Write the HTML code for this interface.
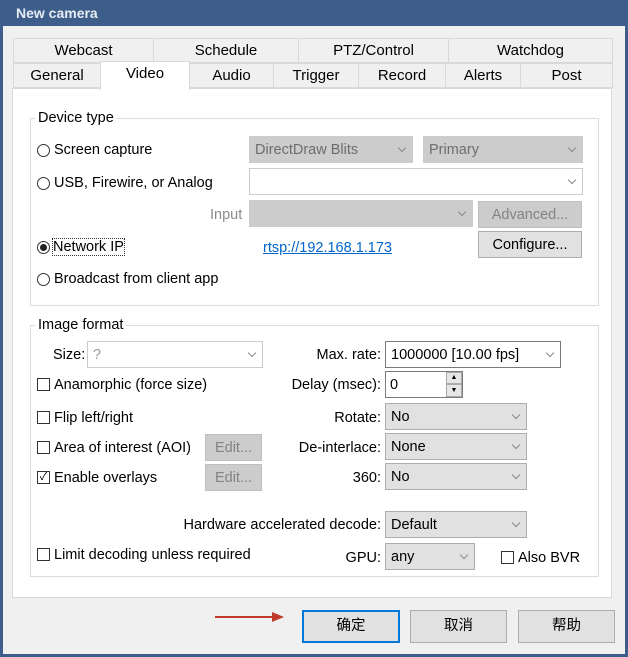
<!DOCTYPE html>
<html><head><meta charset="utf-8"><style>
*{box-sizing:border-box}
body{margin:0;width:628px;height:657px;overflow:hidden;background:#3d5e8b;font-family:"Liberation Sans","Noto Sans CJK SC",sans-serif;font-size:14px;color:#000}
.a{position:absolute}
.title{position:absolute;left:16px;top:5px;color:#e6ecf4;font-weight:bold;font-size:14px;z-index:2}
.tab{position:absolute;height:25px;border:1px solid #d9d9d9;background:#f0f0f0;text-align:center;line-height:24px;font-size:15px}
.panel{position:absolute;left:12px;top:88px;width:600px;height:510px;background:#fff;border:1px solid #d9d9d9}
.grp{position:absolute;border:1px solid #dcdcdc}
.gl{position:absolute;background:#fff;padding:0 3px;font-size:14.5px}
.cb{position:absolute;height:27px;border:1px solid #ccc;background:#ccc;color:#6d6d6d;padding-left:5px;line-height:27px;font-size:14.5px}
.cb.w{background:#fff;color:#000;border-color:#7a7a7a}
.cb.l{background:#fff;border-color:#ccc}
.cb.g{background:#e1e1e1;color:#000;border-color:#adadad}
.cb i{position:absolute;right:7px;top:8px;width:6px;height:6px;border-right:1px solid #888;border-bottom:1px solid #888;transform:rotate(45deg)}
.btn{position:absolute;height:27px;border:1px solid #adadad;background:#e1e1e1;text-align:center;line-height:26px;font-size:14.5px}
.btn.d{background:#cccccc;border-color:#bfbfbf;color:#838383}
.t{position:absolute;font-size:14.5px;white-space:nowrap}
.r{position:absolute;width:13px;height:13px;border:1px solid #333;border-radius:50%;background:#fff}
.r.on::after{content:"";position:absolute;left:2px;top:2px;width:7px;height:7px;border-radius:50%;background:#222}
.c{position:absolute;width:13px;height:13px;border:1px solid #333;background:#fff}
.rt{text-align:right}
</style></head><body>
<div class="title">New camera</div>
<div style="position:absolute;left:0;top:0;width:628px;height:657px">
<div style="position:absolute;left:3px;top:26px;width:622px;height:628px;background:#f0f0f0"></div>
<div class="tab" style="left:13px;top:38px;width:141px">Webcast</div>
<div class="tab" style="left:153px;top:38px;width:146px">Schedule</div>
<div class="tab" style="left:298px;top:38px;width:151px">PTZ/Control</div>
<div class="tab" style="left:448px;top:38px;width:165px">Watchdog</div>
<div class="tab" style="left:13px;top:63px;width:88px">General</div>
<div class="tab" style="left:189px;top:63px;width:85px">Audio</div>
<div class="tab" style="left:273px;top:63px;width:86px">Trigger</div>
<div class="tab" style="left:358px;top:63px;width:88px">Record</div>
<div class="tab" style="left:445px;top:63px;width:76px">Alerts</div>
<div class="tab" style="left:520px;top:63px;width:93px">Post</div>
<div class="panel"></div>
<div class="tab" style="left:100px;top:61px;width:90px;height:29px;background:#fff;border-bottom:none;line-height:24px">Video</div>

<div class="grp" style="left:30px;top:118px;width:569px;height:188px"></div>
<div class="gl" style="left:35px;top:110px">Device type</div>
<div class="r" style="left:37px;top:144px"></div><div class="t" style="left:54px;top:142px">Screen capture</div>
<div class="r" style="left:37px;top:177px"></div><div class="t" style="left:54px;top:175px">USB, Firewire, or Analog</div>
<div class="r on" style="left:37px;top:241px"></div><div class="t" style="left:53px;top:239px;outline:1px dotted #333">Network IP</div>
<div class="r" style="left:37px;top:273px"></div><div class="t" style="left:54px;top:271px">Broadcast from client app</div>
<div class="cb" style="left:249px;top:136px;width:164px">DirectDraw Blits<i></i></div>
<div class="cb" style="left:423px;top:136px;width:160px">Primary<i></i></div>
<div class="cb l" style="left:249px;top:168px;width:334px"><i></i></div>
<div class="t" style="left:210px;top:207px;color:#8a8a8a">Input</div>
<div class="cb" style="left:249px;top:200px;width:224px"><i></i></div>
<div class="btn d" style="left:478px;top:201px;width:104px">Advanced...</div>
<div class="t" style="left:263px;top:240px;color:#0066cc;text-decoration:underline">rtsp://192.168.1.173</div>
<div class="btn" style="left:478px;top:231px;width:104px">Configure...</div>

<div class="grp" style="left:30px;top:325px;width:569px;height:252px"></div>
<div class="gl" style="left:35px;top:317px">Image format</div>
<div class="t" style="left:53px;top:347px">Size:</div>
<div class="cb l" style="left:87px;top:341px;width:176px;color:#999">?<i></i></div>
<div class="t rt" style="left:250px;width:131px;top:347px">Max. rate:</div>
<div class="cb w" style="left:385px;top:341px;width:176px">1000000 [10.00 fps]<i></i></div>
<div class="t rt" style="left:250px;width:131px;top:377px">Delay (msec):</div>
<div class="cb w" style="left:385px;top:371px;width:78px;padding-left:4px">0</div>
<div class="a" style="left:446px;top:372px;width:16px;height:12px;border:1px solid #aaa;background:#e6e6e6;font-size:7px;text-align:center;line-height:10px">▲</div>
<div class="a" style="left:446px;top:384px;width:16px;height:13px;border:1px solid #aaa;background:#e6e6e6;font-size:7px;text-align:center;line-height:11px">▼</div>
<div class="t rt" style="left:250px;width:131px;top:410px">Rotate:</div>
<div class="cb g" style="left:385px;top:403px;width:142px">No<i></i></div>
<div class="t rt" style="left:250px;width:131px;top:440px">De-interlace:</div>
<div class="cb g" style="left:385px;top:433px;width:142px">None<i></i></div>
<div class="t rt" style="left:250px;width:131px;top:470px">360:</div>
<div class="cb g" style="left:385px;top:463px;width:142px">No<i></i></div>
<div class="c" style="left:37px;top:378px"></div><div class="t" style="left:54px;top:377px">Anamorphic (force size)</div>
<div class="c" style="left:37px;top:411px"></div><div class="t" style="left:54px;top:410px">Flip left/right</div>
<div class="c" style="left:37px;top:441px"></div><div class="t" style="left:54px;top:440px">Area of interest (AOI)</div>
<div class="c" style="left:37px;top:471px;font-size:11px;line-height:11px;text-align:center">✓</div><div class="t" style="left:54px;top:470px">Enable overlays</div>
<div class="btn d" style="left:205px;top:434px;width:57px">Edit...</div>
<div class="btn d" style="left:205px;top:464px;width:57px">Edit...</div>
<div class="t rt" style="left:100px;width:281px;top:517px">Hardware accelerated decode:</div>
<div class="cb g" style="left:385px;top:511px;width:142px">Default<i></i></div>
<div class="c" style="left:37px;top:548px"></div><div class="t" style="left:54px;top:547px">Limit decoding unless required</div>
<div class="t rt" style="left:300px;width:81px;top:550px">GPU:</div>
<div class="cb g" style="left:385px;top:543px;width:90px">any<i></i></div>
<div class="c" style="left:501px;top:551px"></div><div class="t" style="left:518px;top:550px">Also BVR</div>

<div class="a" style="left:215px;top:616px;width:62px;height:2px;background:#c0392b"></div>
<div class="a" style="left:272px;top:612px;width:0;height:0;border-left:12px solid #c0392b;border-top:5px solid transparent;border-bottom:5px solid transparent"></div>
<div class="btn" style="left:302px;top:610px;width:98px;height:33px;line-height:29px;border:2px solid #0078d7">确定</div>
<div class="btn" style="left:410px;top:610px;width:97px;height:33px;line-height:31px">取消</div>
<div class="btn" style="left:518px;top:610px;width:97px;height:33px;line-height:31px">帮助</div>
</div>
</body></html>
